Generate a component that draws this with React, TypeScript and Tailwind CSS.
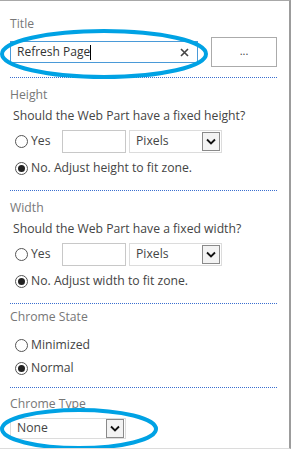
import React from "react";

function Radio({ checked }: { checked?: boolean }) {
  return (
    <span className="w-[13px] h-[13px] rounded-full border border-[#555] bg-white flex items-center justify-center shrink-0">
      {checked && <span className="w-[7px] h-[7px] rounded-full bg-[#222]" />}
    </span>
  );
}

function Chevron() {
  return (
    <span className="w-[18px] h-[19px] border border-[#8a8a8a] bg-[#f3f3f3] flex items-center justify-center shrink-0">
      <svg width="10" height="7" viewBox="0 0 10 7">
        <path d="M1 1.5 L5 5.5 L9 1.5" fill="none" stroke="#111" strokeWidth="1.8" />
      </svg>
    </span>
  );
}

function Select({ value, width, height }: { value: string; width: string; height: string }) {
  return (
    <div className={`${width} ${height} border border-[#dcdcdc] bg-white flex items-center justify-between pl-[6px] pr-[1px]`}>
      <span className="text-[#444]">{value}</span>
      <Chevron />
    </div>
  );
}

function SizeSection({ label, dim }: { label: string; dim: string }) {
  return (
    <div className="border-b border-dotted border-[#3a6fd0] pt-[8px] pb-[13px]">
      <div className="text-[#777] leading-[18px]">{label}</div>
      <div className="pl-[3px] mt-[3px] text-[#444] leading-[18px]">
        Should the Web Part have a fixed {dim}?
      </div>
      <div className="pl-[5px] mt-[5px] flex items-center h-[23px]">
        <div className="w-[47px] flex items-center">
          <Radio />
          <span className="ml-[3px] text-[#444]">Yes</span>
        </div>
        <div className="w-[64px] h-[23px] border border-[#c8c8c8] bg-white" />
        <div className="ml-[3px]">
          <Select value="Pixels" width="w-[93px]" height="h-[23px]" />
        </div>
      </div>
      <div className="pl-[5px] mt-[6px] flex items-center h-[18px]">
        <Radio checked />
        <span className="ml-[3px] text-[#444]">No. Adjust {dim} to fit zone.</span>
      </div>
    </div>
  );
}

export default function App() {
  return (
    <div
      className="relative w-[291px] h-[449px] bg-white border-t border-r-2 border-b border-t-[#a8a8a8] border-r-[#9c9c9c] border-b-[#dcdcdc] overflow-hidden text-[12.2px]"
      style={{ fontFamily: '"Open Sans", "Noto Sans", sans-serif' }}
    >
      <div className="pl-[10px] w-[277px]">
        {/* Title */}
        <div className="border-b border-dotted border-[#3a6fd0] pt-[14px] pb-[10px]">
          <div className="text-[#777] leading-[18px]">Title</div>
          <div className="mt-[4px] flex items-center h-[30px]">
            <div className="w-[188px] h-[22px] border border-[#4a9ad8] bg-white flex items-center pl-[6px] pr-[8px]">
              <span className="text-[#333] text-[12px]">Refresh Page</span>
              <span className="w-px h-[15px] bg-black" />
              <svg className="ml-auto" width="9" height="9" viewBox="0 0 9 9">
                <path d="M1 1 L8 8 M8 1 L1 8" stroke="#444" strokeWidth="1.6" />
              </svg>
            </div>
            <div className="ml-auto w-[66px] h-[30px] border border-[#ababab] bg-white flex items-center justify-center text-[#444] text-[11px] pb-[2px]">
              ...
            </div>
          </div>
        </div>

        <SizeSection label="Height" dim="height" />
        <SizeSection label="Width" dim="width" />

        {/* Chrome State */}
        <div className="border-b border-dotted border-[#3a6fd0] pt-[4px] pb-[10px]">
          <div className="text-[#777] leading-[18px]">Chrome State</div>
          <div className="pl-[5px] mt-[10px] flex items-center h-[18px]">
            <Radio />
            <span className="ml-[3px] text-[#444]">Minimized</span>
          </div>
          <div className="pl-[5px] mt-[5px] flex items-center h-[18px]">
            <Radio checked />
            <span className="ml-[3px] text-[#444]">Normal</span>
          </div>
        </div>

        {/* Chrome Type */}
        <div className="pt-[7px]">
          <div className="text-[#777] leading-[18px]">Chrome Type</div>
          <div className="mt-[5px]">
            <Select value="None" width="w-[116px]" height="h-[21px]" />
          </div>
        </div>
      </div>

      <svg className="absolute left-0 top-0 pointer-events-none" width="291" height="450">
        <ellipse cx="104" cy="53" rx="102" ry="23" fill="none" stroke="#00a2e4" strokeWidth="4" />
        <ellipse cx="79" cy="428" rx="77" ry="19" fill="none" stroke="#00a2e4" strokeWidth="4" />
      </svg>
    </div>
  );
}
